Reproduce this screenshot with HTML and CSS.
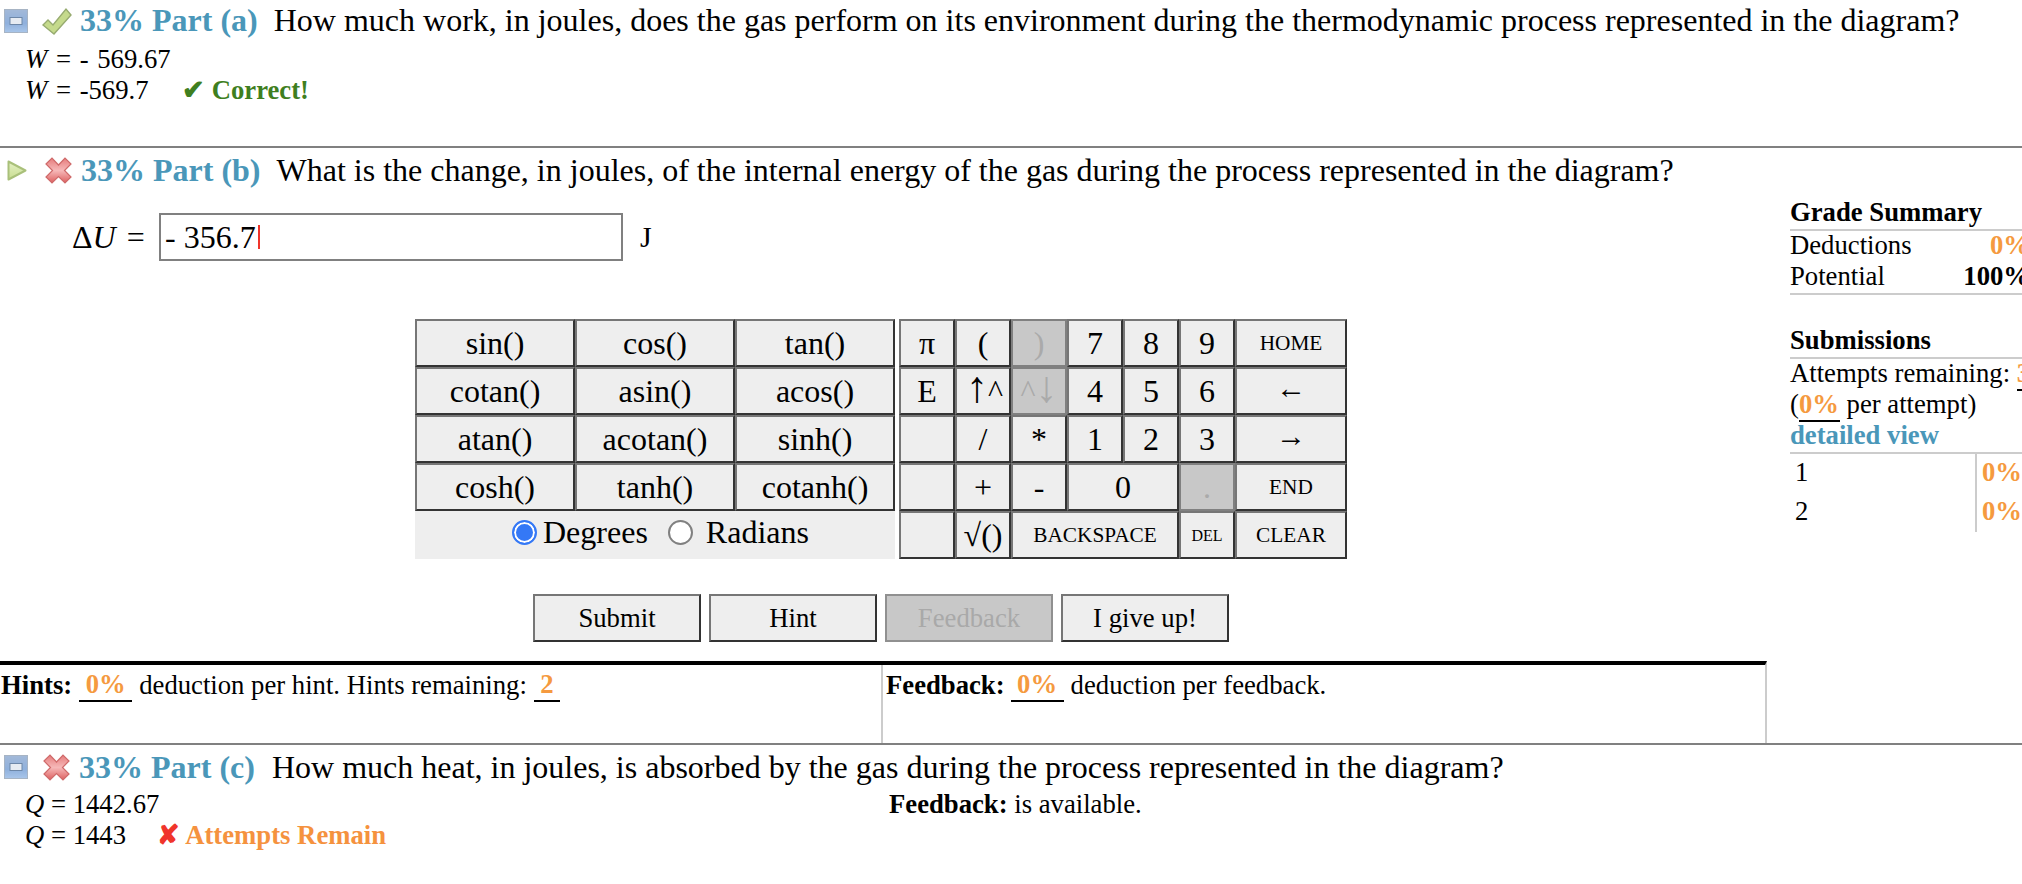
FILE: index.html
```html
<!DOCTYPE html>
<html lang="en">
<head>
<meta charset="utf-8">
<title>Thermodynamics problem</title>
<link rel="stylesheet" href="styles.css">
</head>
<body>
<svg class="defs" width="0" height="0" aria-hidden="true">
  <defs>
    <filter id="soft" x="-20%" y="-20%" width="140%" height="140%"><feGaussianBlur stdDeviation="0.6"/></filter>
    <linearGradient id="boxg" x1="0" y1="0" x2="0" y2="1"><stop offset="0" stop-color="#a3b9d8"/><stop offset="0.6" stop-color="#8fb0dc"/><stop offset="1" stop-color="#a9c6ea"/></linearGradient>
    <linearGradient id="crossg" x1="0" y1="0" x2="0" y2="1"><stop offset="0" stop-color="#e67c7c"/><stop offset="0.5" stop-color="#f6b8b8"/><stop offset="1" stop-color="#dd6060"/></linearGradient>
    <linearGradient id="playg" x1="0" y1="0" x2="0" y2="1"><stop offset="0" stop-color="#e4f0c4"/><stop offset="1" stop-color="#c8de90"/></linearGradient>
    <symbol id="i-minus" viewBox="0 0 24 24">
      <g filter="url(#soft)"><rect x="0.5" y="0.5" width="23" height="23" fill="url(#boxg)" stroke="#a7b4c4"/>
      <rect x="6" y="8.5" width="12" height="7" fill="#e6ebf2" stroke="#6d87a8"/></g>
    </symbol>
    <symbol id="i-check" viewBox="0 0 30 27">
      <path d="M1 17 L6 12 L11 17 L24 1 L29 7 L12 26 Z" fill="#c5da8c" stroke="#97ab70" stroke-width="1.4" filter="url(#soft)"/>
    </symbol>
    <symbol id="i-cross" viewBox="0 0 27 27">
      <path d="M1 7 L7 1 L13.5 8 L20 1 L26 7 L19.5 13.5 L26 20 L20 26 L13.5 19.5 L7 26 L1 20 L7.5 13.5 Z" fill="url(#crossg)" stroke="#cf6a6a" stroke-width="1.2" filter="url(#soft)"/>
    </symbol>
    <symbol id="i-play" viewBox="0 0 20 21">
      <path d="M1.5 1.5 L18.5 10.5 L1.5 19.5 Z" fill="url(#playg)" stroke="#a9c07a" stroke-width="2" stroke-linejoin="round" filter="url(#soft)"/>
    </symbol>
  </defs>
</svg>

<section class="part part-a">
  <h2 class="head">
    <svg class="ic ic-box"><use href="#i-minus"/></svg>
    <svg class="ic ic-check"><use href="#i-check"/></svg>
    <span class="label">33% Part (a)</span>
    <span class="question">How much work, in joules, does the gas perform on its environment during the thermodynamic process represented in the diagram?</span>
  </h2>
  <div class="answers">
    <div class="ans"><span class="wide"><i>W</i> = - 569.67</span></div>
    <div class="ans"><span class="val-a wide"><i>W</i> = -569.7</span><b class="correct">✔ Correct!</b></div>
  </div>
</section>

<section class="part-b">
  <div class="main">
    <h2 class="head head-b">
      <svg class="ic ic-play"><use href="#i-play"/></svg>
      <svg class="ic ic-cross"><use href="#i-cross"/></svg>
      <span class="label">33% Part (b)</span>
      <span class="question">What is the change, in joules, of the internal energy of the gas during the process represented in the diagram?</span>
    </h2>

    <div class="entry">
      <span class="entry-label">Δ<i>U</i> =</span>
      <div class="entry-box"><span>- 356.7</span><span class="caret"></span></div>
      <span class="unit">J</span>
    </div>

    <div class="keypad">
      <div class="fn-wrap">
        <div class="fn-grid">
          <button class="key">sin()</button><button class="key">cos()</button><button class="key">tan()</button>
          <button class="key">cotan()</button><button class="key">asin()</button><button class="key">acos()</button>
          <button class="key">atan()</button><button class="key">acotan()</button><button class="key">sinh()</button>
          <button class="key">cosh()</button><button class="key">tanh()</button><button class="key">cotanh()</button>
        </div>
        <div class="modes">
          <input class="radio" type="radio" name="mode" checked aria-label="Degrees"><span class="mode-d">Degrees</span>
          <input class="radio radio-r" type="radio" name="mode" aria-label="Radians"><span class="mode-r">Radians</span>
        </div>
      </div>
      <div class="num-grid">
        <button class="key">π</button><button class="key">(</button><button class="key off">)</button><button class="key">7</button><button class="key">8</button><button class="key">9</button><button class="key small">HOME</button>
        <button class="key">E</button><button class="key key-up"><span class="arr-v">↑</span>^</button><button class="key off">^<span class="arr-v">↓</span></button><button class="key">4</button><button class="key">5</button><button class="key">6</button><button class="key arr-h">←</button>
        <button class="key"></button><button class="key">/</button><button class="key">*</button><button class="key">1</button><button class="key">2</button><button class="key">3</button><button class="key arr-h">→</button>
        <button class="key"></button><button class="key">+</button><button class="key">-</button><button class="key span2">0</button><button class="key off">.</button><button class="key small">END</button>
        <button class="key"></button><button class="key">√()</button><button class="key small span2-3">BACKSPACE</button><button class="key tiny">DEL</button><button class="key small">CLEAR</button>
      </div>
    </div>

    <div class="actions">
      <button class="act">Submit</button>
      <button class="act">Hint</button>
      <button class="act off">Feedback</button>
      <button class="act">I give up!</button>
    </div>

    <div class="info">
      <div class="info-cell"><b>Hints:</b><span class="pct">0%</span><span class="gap-text">deduction per hint. Hints remaining:</span><span class="pct pct-n">2</span></div>
      <div class="info-cell info-right"><b>Feedback:</b><span class="pct">0%</span><span class="gap-text">deduction per feedback.</span></div>
    </div>
  </div>

  <aside class="side">
    <h3 class="side-title">Grade Summary</h3>
    <div class="side-block">
      <div class="side-row"><span>Deductions</span><b class="orange">0%</b></div>
      <div class="side-row"><span>Potential</span><b>100%</b></div>
    </div>
    <h3 class="side-title sub-title">Submissions</h3>
    <div class="side-block">
      <div class="side-line">Attempts remaining: <span class="pct-s">3</span></div>
      <div class="side-line">(<span class="pct-u">0%</span> per attempt)</div>
      <div class="side-line link">detailed view</div>
    </div>
    <div class="subs">
      <div class="sub-row"><span class="sub-n">1</span><b class="sub-v orange">0%</b></div>
      <div class="sub-row"><span class="sub-n">2</span><b class="sub-v orange">0%</b></div>
    </div>
  </aside>
</section>

<section class="part part-c">
  <h2 class="head">
    <svg class="ic ic-box"><use href="#i-minus"/></svg>
    <svg class="ic ic-cross-c"><use href="#i-cross"/></svg>
    <span class="label">33% Part (c)</span>
    <span class="question">How much heat, in joules, is absorbed by the gas during the process represented in the diagram?</span>
  </h2>
  <div class="answers">
    <div class="ans ans-c"><span class="q1"><i>Q</i> = 1442.67</span><span><b>Feedback:</b> is available.</span></div>
    <div class="ans"><span class="val-c"><i>Q</i> = 1443</span><b class="wrong"><span class="x">✘</span> Attempts Remain</b></div>
  </div>
</section>
</body>
</html>
```

FILE: styles.css
```css
html, body { margin: 0; padding: 0; background: #fff; overflow: hidden; }
body { width: 2022px; height: 884px; font-family: "Liberation Serif", "Times New Roman", serif; font-size: 26.7px; color: #000; }
.defs { position: absolute; }
button { font-family: inherit; color: #000; padding: 0; margin: 0; }

.part-a { height: 146px; border-bottom: 2px solid #808080; }
.head { display: flex; align-items: center; margin: 0; height: 44px; font-weight: normal; font-size: 32px; white-space: nowrap; }
.part-a .head { height: 41px; margin-bottom: 3px; }
.ic { display: block; flex: none; }
.ic-box { width: 24px; height: 24px; margin-left: 4px; }
.ic-check { width: 30px; height: 27px; margin-left: 14px; margin-top: 2px; }
.ic-play { width: 20px; height: 21px; margin-left: 7px; }
.ic-cross { width: 27px; height: 27px; margin-left: 18px; }
.ic-cross-c { width: 27px; height: 27px; margin-left: 15px; }
.label { font-weight: bold; color: #4a97b9; margin-left: 8px; }
.head-b .label { margin-left: 9px; }
.part-c .label { margin-left: 9px; }
.question { margin-left: 16px; }
.part-c .question { margin-left: 17px; }

.answers { padding-left: 25px; }
.ans { height: 31px; line-height: 31px; display: flex; }
.wide { word-spacing: 2px; }
.val-a { width: 157px; }
.val-c { width: 132px; }
.correct { color: #3f7f1f; }
.wrong { color: #f5923e; }
.x { color: #f0352b; }
.ans-c .q1 { width: 864px; }

.part-b { display: flex; height: 595px; border-bottom: 2px solid #808080; }
.main { width: 1767px; flex: none; }

.entry { display: flex; align-items: center; height: 48px; margin-top: 21px; font-size: 32px; padding-left: 72px; }
.entry-label { width: 87px; word-spacing: 3px; white-space: nowrap; }
.entry-box { width: 456px; height: 44px; border: 2px solid #808080; padding-left: 4px; display: flex; align-items: center; }
.caret { width: 2px; height: 24px; background: #f0352b; margin-left: 2px; }
.unit { margin-left: 17px; font-size: 30px; }

.keypad { display: flex; gap: 4px; margin-top: 58px; padding-left: 415px; }
.fn-wrap { width: 480px; background: #eee; }
.fn-grid { display: grid; grid-template-columns: repeat(3, 160px); grid-auto-rows: 48px; }
.num-grid { display: grid; grid-template-columns: repeat(6, 56px) 112px; grid-auto-rows: 48px; }
.key { background: #eee; border-width: 2px; border-style: solid; border-color: #767676 #333 #333 #767676; font-size: 32px; line-height: 1; }
.key.small { font-size: 21.3px; padding-top: 2px; }
.key.tiny { font-size: 16px; padding-top: 2px; }
.key.arr-h { font-size: 30px; padding-bottom: 7px; }
.key.key-up { padding-left: 3px; }
.key.span2 { grid-column: span 2; }
.key.span2-3 { grid-column: span 3; }
.key.off { background: #c8c8c8; border-color: #808080; color: #aaa; }
.arr-v { font-size: 44px; line-height: 0; }

.modes { display: flex; align-items: center; height: 48px; box-sizing: border-box; padding-bottom: 6px; font-size: 32px; padding-left: 97px; }
.radio { appearance: none; margin: 0; width: 25px; height: 25px; border-radius: 50%; border: 2px solid #808080; background: #fff; box-sizing: border-box; flex: none; }
.radio:checked { border-color: #3478f6; background: #3478f6; box-shadow: inset 0 0 0 2px #fff; }
.mode-d { margin-left: 6px; }
.radio-r { margin-left: 20px; }
.mode-r { margin-left: 13px; }

.actions { display: flex; gap: 8px; margin-top: 35px; padding-left: 533px; }
.act { width: 168px; height: 48px; font-size: 26.7px; background: #eee; border-width: 2px; border-style: solid; border-color: #767676 #333 #333 #767676; }
.act.off { background: #c8c8c8; border-color: #909090; color: #a9a9a9; }

.info { display: flex; margin-top: 19px; border-top: 4px solid #000; height: 78px; border-right: 2px solid #ccc; }
.info-cell { width: 881px; flex: none; padding-left: 1px; display: flex; align-items: flex-start; height: 78px; line-height: 36px; box-sizing: border-box; padding-top: 2px; }
.info-right { flex: 1; width: auto; border-left: 2px solid #ccc; padding-left: 3px; }
.pct { color: #f59a3f; font-weight: bold; width: 53px; height: 33px; margin-left: 7px; text-align: center; border-bottom: 2px solid #000; line-height: 34px; }
.pct-n { width: 26px; }
.gap-text { margin-left: 7px; }
.info-right .pct { margin-left: 6px; }
.info-right .gap-text { margin-left: 7px; }

.side { margin-left: 23px; width: 232px; flex: none; }
.side-title { margin: 46px 0 0; font-size: 26.7px; height: 35px; line-height: 37px; font-weight: bold; white-space: nowrap; }
.side-title.sub-title { margin-top: 27px; }
.side-block { border-top: 2px solid #ccc; border-bottom: 2px solid #ccc; }
.side-row { display: flex; justify-content: space-between; height: 31px; line-height: 28px; width: 240px; }
.side-line { height: 31px; line-height: 28px; white-space: nowrap; }
.link { color: #4a97b9; font-weight: bold; }
.orange { color: #f59a3f; }
.pct-s { color: #f59a3f; font-weight: bold; border-bottom: 2px solid #000; display: inline-block; line-height: 28px; padding: 0 6px 2px 0; }
.pct-u { color: #f59a3f; font-weight: bold; border-bottom: 2px solid #000; display: inline-block; line-height: 28px; padding: 0 1px 2px 0; }
.sub-row { display: flex; height: 39px; line-height: 37px; }
.sub-n { width: 191px; padding-left: 5px; box-sizing: border-box; border-right: 2px solid #ccc; }
.sub-v { margin-left: 5px; }
```
